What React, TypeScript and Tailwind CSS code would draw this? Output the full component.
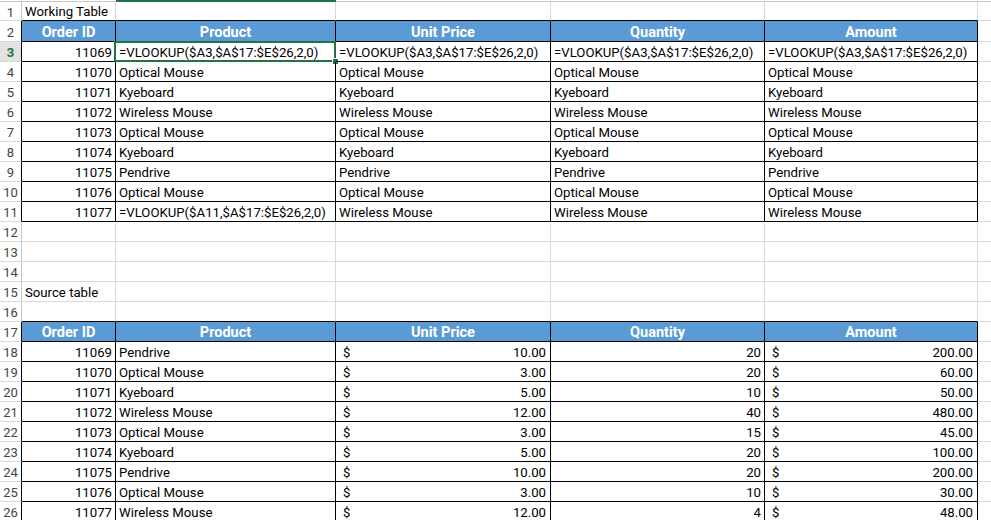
import React from 'react';

const colW = ['w-[94px]', 'w-[220px]', 'w-[215px]', 'w-[214px]', 'w-[213px]'];

type Kind = 'grid' | 'above' | 'head' | 'table';

interface CellProps {
  col: number;
  kind: Kind;
  children?: React.ReactNode;
  align?: 'left' | 'right' | 'center';
  selected?: boolean;
}

const Cell: React.FC<CellProps> = ({ col, kind, children, align = 'left', selected }) => {
  let border = 'border-r-[#d9d9d9] border-b-[#d9d9d9]';
  if (kind === 'above') border = 'border-r-[#d9d9d9] border-b-black';
  if (kind === 'table' || kind === 'head') border = 'border-r-black border-b-black';
  const bg = kind === 'head' ? 'bg-[#5b9bd5] text-white font-bold text-[14.5px] pt-[4px]' : 'text-black pt-[2px]';
  const justify = align === 'right' ? 'justify-end pr-[3px]' : align === 'center' ? 'justify-center' : 'justify-start pl-[3px]';
  return (
    <div className={`relative h-full shrink-0 border-r border-b flex items-center whitespace-nowrap ${colW[col]} ${border} ${bg} ${justify}`}>
      {children}
      {selected && (
        <>
          <div className="absolute -left-[2px] -top-[1px] -right-[1px] -bottom-[1px] border-2 border-[#217346] pointer-events-none" />
          <div className="absolute -right-[4px] -bottom-[4px] w-[7px] h-[7px] bg-[#217346] border border-white" />
        </>
      )}
    </div>
  );
};

const Money: React.FC<{ col: number; value: string }> = ({ col, value }) => (
  <div className={`h-full shrink-0 border-r border-b border-r-black border-b-black flex items-center pt-[2px] justify-between ${colW[col]}`}>
    <span className="pl-[7px]">$</span>
    <span className="pr-[4px]">{value}</span>
  </div>
);

interface RowProps {
  n: number;
  h?: string;
  table?: boolean;
  active?: boolean;
  children: React.ReactNode;
}

const Row: React.FC<RowProps> = ({ n, h = 'h-[20px]', table, active, children }) => (
  <div className={`flex ${h}`}>
    <div
      className={`w-[22px] shrink-0 h-full border-b border-r border-b-[#d9d9d9] flex items-center justify-center pt-[2px] text-[13px] ${
        table ? 'border-r-black' : 'border-r-[#c6c6c6]'
      } ${active ? 'bg-[#e2e2e2] text-[#217346] font-bold' : 'text-[#444]'}`}
    >
      {n}
    </div>
    {children}
    <div className="flex-1 h-full border-b border-b-[#d9d9d9]" />
  </div>
);

const formula = (r: string) => `=VLOOKUP($A${r},$A$17:$E$26,2,0)`;

const working = [
  { id: 11069, p: formula('3'), rest: formula('3') },
  { id: 11070, p: 'Optical Mouse', rest: 'Optical Mouse' },
  { id: 11071, p: 'Kyeboard', rest: 'Kyeboard' },
  { id: 11072, p: 'Wireless Mouse', rest: 'Wireless Mouse' },
  { id: 11073, p: 'Optical Mouse', rest: 'Optical Mouse' },
  { id: 11074, p: 'Kyeboard', rest: 'Kyeboard' },
  { id: 11075, p: 'Pendrive', rest: 'Pendrive' },
  { id: 11076, p: 'Optical Mouse', rest: 'Optical Mouse' },
  { id: 11077, p: formula('11'), rest: 'Wireless Mouse' },
];

const source = [
  { id: 11069, p: 'Pendrive', price: '10.00', qty: 20, amt: '200.00' },
  { id: 11070, p: 'Optical Mouse', price: '3.00', qty: 20, amt: '60.00' },
  { id: 11071, p: 'Kyeboard', price: '5.00', qty: 10, amt: '50.00' },
  { id: 11072, p: 'Wireless Mouse', price: '12.00', qty: 40, amt: '480.00' },
  { id: 11073, p: 'Optical Mouse', price: '3.00', qty: 15, amt: '45.00' },
  { id: 11074, p: 'Kyeboard', price: '5.00', qty: 20, amt: '100.00' },
  { id: 11075, p: 'Pendrive', price: '10.00', qty: 20, amt: '200.00' },
  { id: 11076, p: 'Optical Mouse', price: '3.00', qty: 10, amt: '30.00' },
  { id: 11077, p: 'Wireless Mouse', price: '12.00', qty: 4, amt: '48.00' },
];

const headers = ['Order ID', 'Product', 'Unit Price', 'Quantity', 'Amount'];

const HeaderRow: React.FC<{ n: number; h?: string }> = ({ n, h }) => (
  <Row n={n} h={h} table>
    {headers.map((t, i) => (
      <Cell key={t} col={i} kind="head" align="center">
        {t}
      </Cell>
    ))}
  </Row>
);

const EmptyRow: React.FC<{ n: number; label?: string; above?: boolean }> = ({ n, label, above }) => (
  <Row n={n}>
    {colW.map((_, i) => (
      <Cell key={i} col={i} kind={above ? 'above' : 'grid'}>
        {i === 0 ? label : null}
      </Cell>
    ))}
  </Row>
);

const App: React.FC = () => {
  return (
    <div className="w-[991px] h-[520px] overflow-hidden bg-white text-[13.2px] leading-none" style={{ fontFamily: 'Roboto, "Open Sans", sans-serif' }}>
      {/* column header bottom edge */}
      <div className="flex h-[2px]">
        <div className="w-[116px] border-b border-[#c6c6c6]" />
        <div className="w-[220px] bg-[#217346]" />
        <div className="flex-1 border-b border-[#c6c6c6]" />
      </div>

      <Row n={1} h="h-[19px]">
        {colW.map((_, i) => (
          <Cell key={i} col={i} kind="above">
            {i === 0 ? 'Working Table' : null}
          </Cell>
        ))}
      </Row>
      <HeaderRow n={2} h="h-[21px]" />

      {working.map((r, idx) => (
        <Row key={r.id} n={idx + 3} table active={idx === 0}>
          <Cell col={0} kind="table" align="right">{r.id}</Cell>
          <Cell col={1} kind="table" selected={idx === 0}>{r.p}</Cell>
          <Cell col={2} kind="table">{r.rest}</Cell>
          <Cell col={3} kind="table">{r.rest}</Cell>
          <Cell col={4} kind="table">{r.rest}</Cell>
        </Row>
      ))}

      <EmptyRow n={12} />
      <EmptyRow n={13} />
      <EmptyRow n={14} />
      <EmptyRow n={15} label="Source table" />
      <EmptyRow n={16} above />
      <HeaderRow n={17} />

      {source.map((r, idx) => (
        <Row key={r.id} n={idx + 18} table>
          <Cell col={0} kind="table" align="right">{r.id}</Cell>
          <Cell col={1} kind="table">{r.p}</Cell>
          <Money col={2} value={r.price} />
          <Cell col={3} kind="table" align="right">{r.qty}</Cell>
          <Money col={4} value={r.amt} />
        </Row>
      ))}
    </div>
  );
};

export default App;
